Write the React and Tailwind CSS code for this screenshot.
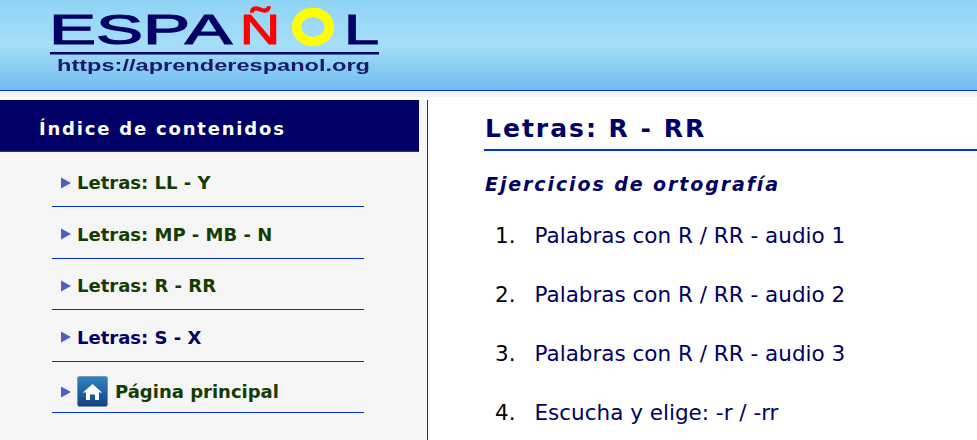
const FONT = "font-['DejaVu_Sans',sans-serif]"

const menu = [
  { label: 'Letras: LL - Y' },
  { label: 'Letras: MP - MB - N' },
  { label: 'Letras: R - RR' },
  { label: 'Letras: S - X', active: true },
]

const exercises = [
  'Palabras con R / RR - audio 1',
  'Palabras con R / RR - audio 2',
  'Palabras con R / RR - audio 3',
  'Escucha y elige: -r / -rr',
]

function Logo() {
  return (
    <svg width="340" height="90" viewBox="0 0 340 90" className="ml-[47px] block blur-[0.4px]">
      <g fontFamily="'Liberation Sans', sans-serif" fontSize="43" fill="#000066" stroke="#000066" strokeWidth="1.2">
        <text x="2" y="44" textLength="183" lengthAdjust="spacingAndGlyphs">ESPA</text>
        <text x="193" y="44" fill="#ff0000" stroke="#ff0000" textLength="40" lengthAdjust="spacingAndGlyphs">Ñ</text>
        <text x="297" y="44" textLength="35" lengthAdjust="spacingAndGlyphs">L</text>
      </g>
      <ellipse cx="266" cy="27" rx="16.4" ry="14.6" fill="none" stroke="#ffff00" strokeWidth="9.5" />
      <rect x="3" y="52" width="329" height="2.5" fill="#000066" />
      <text
        x="10"
        y="71"
        fontFamily="'Liberation Sans', sans-serif"
        fontSize="17"
        fontWeight="bold"
        fill="#1a1a66"
        textLength="313"
        lengthAdjust="spacingAndGlyphs"
      >
        https://aprenderespanol.org
      </text>
    </svg>
  )
}

function Arrow() {
  return (
    <svg width="10" height="12" viewBox="0 0 10 12" className="shrink-0">
      <path d="M0 0.5 L10 6 L0 11.5 Z" fill="#4d5fc4" />
    </svg>
  )
}

function HomeIcon() {
  return (
    <svg width="31" height="31" viewBox="0 0 31 31" className="shrink-0">
      <defs>
        <linearGradient id="homeBg" x1="0" y1="0" x2="0" y2="1">
          <stop offset="0" stopColor="#2f86c4" />
          <stop offset="1" stopColor="#123f80" />
        </linearGradient>
      </defs>
      <rect x="0.5" y="0.5" width="30" height="30" rx="2" fill="url(#homeBg)" stroke="#7d93ad" />
      <path d="M15.5 8 L25 16.5 H22 V24 H18 V18.5 H13 V24 H9 V16.5 H6 Z" fill="#ffffff" />
    </svg>
  )
}

export default function App() {
  return (
    <div className={`h-[440px] w-[977px] overflow-hidden bg-white ${FONT}`}>
      {/* Header */}
      <div className="h-[91px] border-b border-[#0033cc] bg-gradient-to-b from-[#8fd4f5] via-[#a5def9] to-[#6fbdee]">
        <Logo />
      </div>
      <div className="h-[6px] bg-[#f4f4f4]" />

      <div className="mt-[3px] flex">
        {/* Sidebar */}
        <div className="h-[340px] w-[428px] shrink-0 border-r border-[#0033aa] bg-[#f5f5f5]">
          <div className="flex h-[52px] w-[419px] items-center border-b border-[#0033cc] bg-[#000066] pt-[5px] pl-[39px] text-[18px] font-bold tracking-[1.8px] text-white">
            Índice de contenidos
          </div>
          <ul className="mt-[3.4px] ml-[52px] w-[312px]">
            {menu.map((item) => (
              <li
                key={item.label}
                className={`flex h-[51.6px] items-center gap-[6px] border-b border-[#0033cc] pt-[4px] pl-[9px] text-[18px] font-bold ${
                  item.active ? 'text-[#000066]' : 'text-[#143c00]'
                }`}
              >
                <Arrow />
                {item.label}
              </li>
            ))}
            <li className="flex h-[51.6px] items-center gap-[6px] border-b border-[#0033cc] pt-[9px] pl-[9px] text-[18px] font-bold text-[#143c00]">
              <Arrow />
              <HomeIcon />
              <span className="ml-[1px]">Página principal</span>
            </li>
          </ul>
        </div>

        {/* Content */}
        <div className="min-w-0 flex-1 pl-[56px]">
          <h1 className="h-[51px] border-b-2 border-[#0033cc] pt-[11px] pl-[1px] text-[25px] leading-[36px] font-bold tracking-[2px] text-[#000066]">
            Letras: R - RR
          </h1>
          <h2 className="mt-[21px] pl-[1px] text-[19px] leading-[24px] font-bold italic tracking-[1.9px] text-[#000066]">
            Ejercicios de ortografía
          </h2>
          <ol className="mt-[27px] flex list-none flex-col gap-[33px] text-[21.5px] leading-[26px]">
            {exercises.map((text, i) => (
              <li key={text} className="flex">
                <span className="w-[50.5px] pl-[11px] text-black">{i + 1}.</span>
                <span className="text-[#000066]">{text}</span>
              </li>
            ))}
          </ol>
        </div>
      </div>
    </div>
  )
}
